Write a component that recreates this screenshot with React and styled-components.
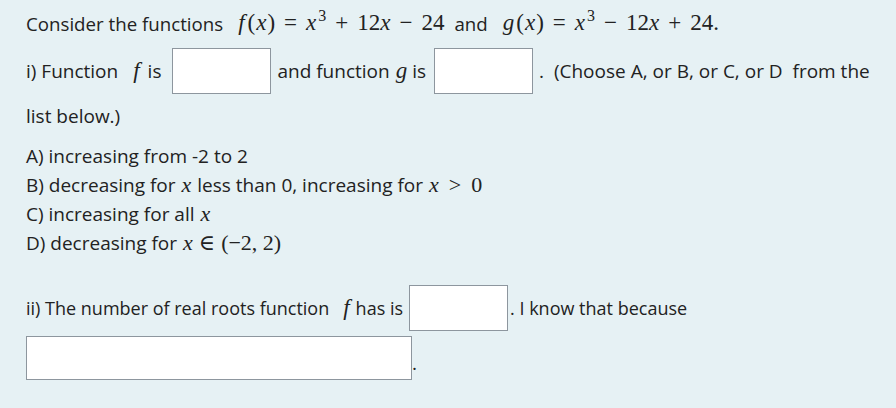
import React from "react";
import styled, { createGlobalStyle } from "styled-components";

const Global = createGlobalStyle`
  html, body { margin: 0; padding: 0; background: #e6f1f4; }
  body { font-family: "Open Sans", "Noto Sans", sans-serif; color: #222; }
`;

const Page = styled.div`
  width: 896px;
  height: 408px;
  box-sizing: border-box;
  background: #e6f1f4;
  padding: 8px 0 0 26px;
  font-size: 19px;
  overflow: hidden;
`;

const Line = styled.div`
  display: flex;
  align-items: center;
  white-space: pre;
  font-size: ${(p) => p.$size || 19}px;
  height: ${(p) => p.$h || 30}px;
  margin-top: ${(p) => p.$mt || 0}px;
`;

const Math = styled.span`
  font-family: "Liberation Serif", "DejaVu Serif", serif;
  font-size: ${(p) => p.$size || 23}px;
  margin: ${(p) => p.$m || "0 6px"};
  white-space: pre;
`;

const I = styled.i`
  font-style: italic;
  margin: ${(p) => p.$m || "0"};
`;

const Op = styled.span`
  margin: 0 ${(p) => p.$s || 9}px;
`;

const Sup = styled.sup`
  font-size: 16px;
  vertical-align: 9px;
  line-height: 0;
  margin-left: 2px;
`;

const Box = styled.span`
  display: inline-block;
  box-sizing: border-box;
  width: ${(p) => p.$w || 99}px;
  height: ${(p) => p.$h || 46}px;
  background: #fff;
  border: 1px solid #8d969e;
  margin: ${(p) => p.$m || "0"};
`;

const Options = styled.div`
  margin-top: 10px;
`;

const Dot = styled.span`
  align-self: flex-end;
  margin-bottom: 4px;
`;

export default function App() {
  return (
    <Page>
      <Global />
      <Line $size={18.7}>
        Consider the functions
        <Math $m="0 10px 0 14px">
          <I $m="0 3px 0 1px">f</I>(<I $m="0 1px">x</I>)<Op>=</Op><I>x</I><Sup>3</Sup>
          <Op>+</Op>12<I>x</I><Op>−</Op>24
        </Math>
        and
        <Math $m="0 0 0 14px">
          <I $m="0 2px 0 1px">g</I>(<I $m="0 1px">x</I>)<Op>=</Op><I>x</I><Sup>3</Sup>
          <Op>−</Op>12<I>x</I><Op>+</Op>24.
        </Math>
      </Line>
      <Line $h={46} $mt={10}>
        i) Function
        <Math $m="0 8px 0 15px"><I>f</I></Math>
        is
        <Box $m="0 6px 0 11px" />
        and function
        <Math $m="0 5px 0 6px"><I>g</I></Math>
        is
        <Box $m="0 6px 0 8px" />
        .  (Choose A, or B, or C, or D  from the
      </Line>
      <Line $mt={7}>list below.)</Line>
      <Options>
        <Line $h={29}>A) increasing from -2 to 2</Line>
        <Line $h={29}>
          B) decreasing for
          <Math $size={22} $m="0 6px"><I>x</I></Math>
          less than 0, increasing for
          <Math $size={22} $m="0 0 0 6px"><I>x</I><Op $s={10}>&gt;</Op>0</Math>
        </Line>
        <Line $h={29}>
          C) increasing for all
          <Math $size={22} $m="0 6px"><I>x</I></Math>
        </Line>
        <Line $h={29}>
          D) decreasing for
          <Math $size={22} $m="0 6px"><I>x</I><Op $s={6}>∈</Op>(−2, 2)</Math>
        </Line>
      </Options>
      <Line $size={18} $h={46} $mt={28}>
        ii) The number of real roots function
        <Math $m="0 6px 0 14px"><I>f</I></Math>
        has is
        <Box $m="0 2px 0 6px" />
        . I know that because
      </Line>
      <Line $h={44} $mt={5}>
        <Box $w={386} $h={44} />
        <Dot>.</Dot>
      </Line>
    </Page>
  );
}
